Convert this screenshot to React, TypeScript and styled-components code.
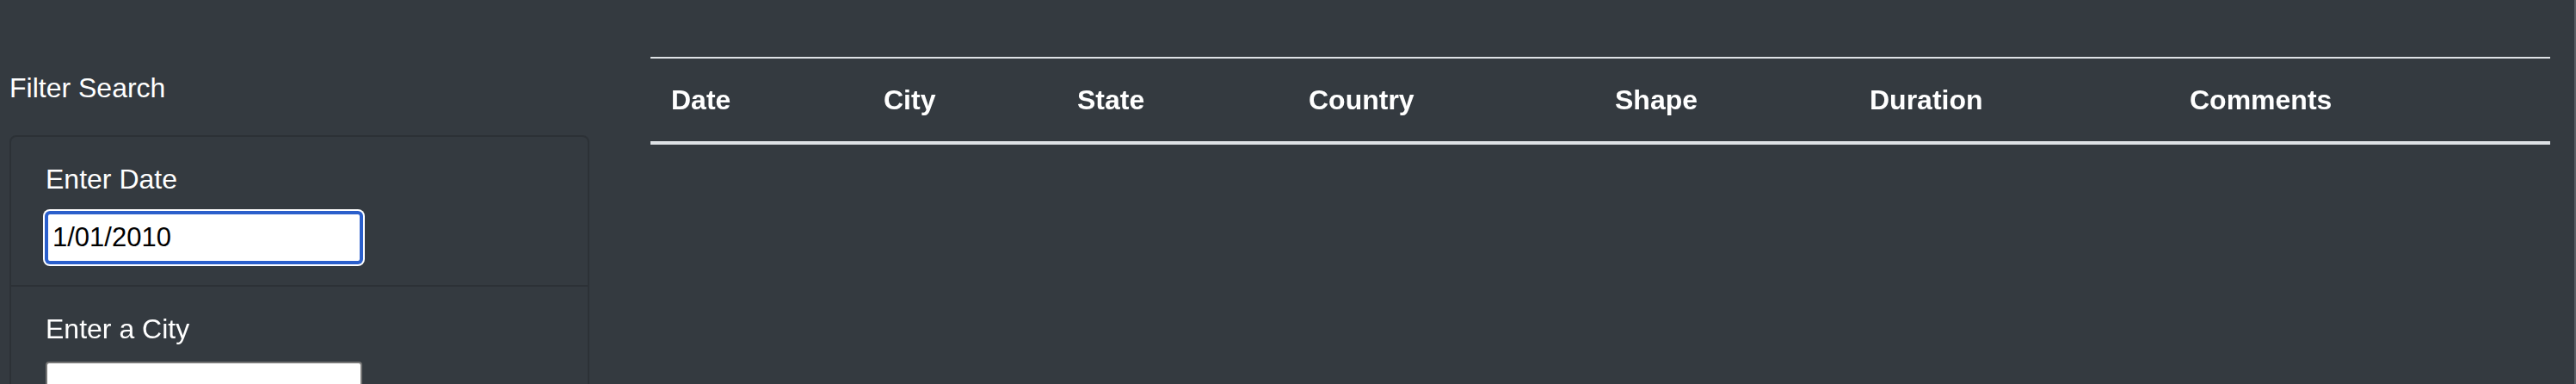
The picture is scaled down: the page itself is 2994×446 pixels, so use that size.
import React, { useEffect, useRef } from "react";
import styled, { createGlobalStyle, css } from "styled-components";

const GlobalStyle = createGlobalStyle`
  html, body {
    margin: 0;
    padding: 0;
    background: #343a40;
    overflow: hidden;
  }
  body {
    font-family: "Liberation Sans", Arial, sans-serif;
    color: #ffffff;
  }
  * { box-sizing: border-box; }
`;

const Page = styled.div`
  display: flex;
  height: 446px;
  overflow: hidden;
  background: #343a40;
`;

const Content = styled.div`
  flex: 1;
  display: flex;
  align-items: flex-start;
  gap: 71px;
  padding-left: 11px;
`;

const Edge = styled.div`
  width: 2px;
  background: #5a5e64;
`;

const Sidebar = styled.aside`
  width: 674px;
  padding-top: 78px;
`;

const Title = styled.div`
  font-size: 32px;
  line-height: 48px;
  margin-bottom: 31px;
  color: #ffffff;
`;

const Panel = styled.ul`
  list-style: none;
  margin: 0;
  padding: 0;
  border: 2px solid #2c3136;
  border-radius: 8px;
`;

const Item = styled.li`
  padding: 25px 40px;
  & + & {
    border-top: 2px solid #2c3136;
  }
`;

const Label = styled.label`
  display: block;
  font-size: 32px;
  line-height: 48px;
  margin-bottom: 14px;
  color: #ffffff;
`;

const Input = styled.input<{ $focused?: boolean }>`
  display: block;
  width: 368px;
  height: 60px;
  margin: 0;
  padding: 0 6px;
  background: #ffffff;
  color: #000000;
  caret-color: #000000;
  font-family: "Liberation Sans", Arial, sans-serif;
  font-size: 31px;
  border: 2px solid #767676;
  border-radius: 4px;
  outline: none;
  ${(p) =>
    p.$focused &&
    css`
      border: 3px solid #2b5fcb;
      padding: 0 5px;
      box-shadow: 0 0 0 1px #2b5fcb, 0 0 0 3px #ffffff;
      border-radius: 5px;
    `}
`;

const Main = styled.main`
  padding-top: 66px;
`;

const Table = styled.table`
  width: 2208px;
  border-collapse: separate;
  border-spacing: 0;
  table-layout: fixed;
  color: #ffffff;
`;

const HeadCell = styled.th<{ $w: number }>`
  width: ${(p) => p.$w}px;
  padding: 24px;
  text-align: left;
  font-size: 32px;
  font-weight: 700;
  line-height: 48px;
  border-top: 2px solid #dee2e6;
  border-bottom: 4px solid #dee2e6;
`;

const columns: [string, number][] = [
  ["Date", 247],
  ["City", 225],
  ["State", 269],
  ["Country", 356],
  ["Shape", 296],
  ["Duration", 372],
  ["Comments", 443],
];

export default function App() {
  const ref = useRef<HTMLInputElement>(null);
  useEffect(() => {
    if (ref.current) {
      ref.current.focus();
      ref.current.setSelectionRange(3, 3);
    }
  }, []);

  return (
    <>
      <GlobalStyle />
      <Page>
        <Content>
          <Sidebar>
            <Title>Filter Search</Title>
            <Panel>
              <Item>
                <Label htmlFor="datetime">Enter Date</Label>
                <Input id="datetime" ref={ref} $focused defaultValue="1/01/2010" />
              </Item>
              <Item>
                <Label htmlFor="city">Enter a City</Label>
                <Input id="city" />
              </Item>
            </Panel>
          </Sidebar>
          <Main>
            <Table>
              <thead>
                <tr>
                  {columns.map(([name, w]) => (
                    <HeadCell key={name} $w={w}>
                      {name}
                    </HeadCell>
                  ))}
                </tr>
              </thead>
              <tbody />
            </Table>
          </Main>
        </Content>
        <Edge />
      </Page>
    </>
  );
}
